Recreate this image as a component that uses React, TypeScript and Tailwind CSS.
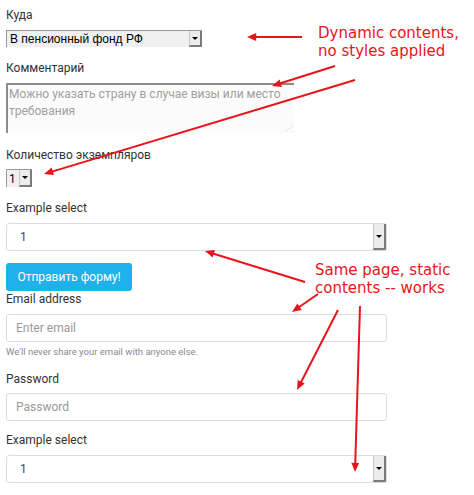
const arrows = [
  { x1: 302, y1: 37, x2: 247, y2: 37 },
  { x1: 335, y1: 66, x2: 272, y2: 86 },
  { x1: 355, y1: 80, x2: 44, y2: 174 },
  { x1: 305, y1: 282, x2: 205, y2: 251 },
  { x1: 318, y1: 294, x2: 292, y2: 312 },
  { x1: 338, y1: 310, x2: 297, y2: 390 },
  { x1: 360, y1: 306, x2: 355, y2: 472 },
];

function Arrow({ x1, y1, x2, y2 }: { x1: number; y1: number; x2: number; y2: number }) {
  const a = Math.atan2(y2 - y1, x2 - x1);
  const len = 10;
  const spread = 0.4;
  const p1 = [x2 - len * Math.cos(a - spread), y2 - len * Math.sin(a - spread)];
  const p2 = [x2 - len * Math.cos(a + spread), y2 - len * Math.sin(a + spread)];
  return (
    <g>
      <line x1={x1} y1={y1} x2={x2 - 4 * Math.cos(a)} y2={y2 - 4 * Math.sin(a)} stroke="#e8141a" strokeWidth={2} />
      <polygon points={`${x2},${y2} ${p1[0]},${p1[1]} ${p2[0]},${p2[1]}`} fill="#e8141a" />
    </g>
  );
}

function NativeButton() {
  return (
    <div className="flex w-[13px] items-center justify-center self-stretch border-l border-[#c8c8c8] bg-[#ececec] border-r-2 border-b-2 border-r-[#7a7a7a] border-b-[#7a7a7a]">
      <div className="h-0 w-0 border-x-[3px] border-t-[3px] border-x-transparent border-t-black" />
    </div>
  );
}

function BsSelect({ value }: { value: string }) {
  return (
    <div className="mt-[6px] flex h-[28px] w-[381px] items-center rounded-[3px] border border-[#dcdcdc] bg-white">
      <span className="flex-1 pl-[13px] text-[12px] text-[#444]">{value}</span>
      <NativeButton />
    </div>
  );
}

function Label({ children, className = "" }: { children: React.ReactNode; className?: string }) {
  return <div className={`text-[12px] text-[#333] ${className}`}>{children}</div>;
}

export default function App() {
  return (
    <div className="relative h-[495px] w-[474px] overflow-hidden bg-white font-['Roboto',sans-serif]">
      <div className="flex flex-col pl-[6px] pt-[6px]">
        <Label className="leading-[18px]">Куда</Label>
        <div className="mt-[6px] flex h-[17px] w-[196px] items-center border border-[#9a9a9a] border-r-0 border-b-0 bg-[#f0f0f0]">
          <span className="flex-1 pl-[3px] text-[12px] leading-none text-black font-['Liberation_Sans',sans-serif]">
            В пенсионный фонд РФ
          </span>
          <NativeButton />
        </div>

        <Label className="mt-[12px] leading-[18px]">Комментарий</Label>
        <div className="mt-[6px] flex h-[50px] w-[288px] border-l-2 border-t-2 border-[#8c8c8c] bg-[#fbfbfb] pl-[1px] pt-[1px]">
          <div className="relative flex-1 text-[12px] leading-[17px] text-[#a0a0a0]">
            Можно указать страну в случае визы или место требования
            <span className="absolute bottom-[2px] right-[2px] text-[6px] leading-none text-[#bbb]">⋰</span>
          </div>
        </div>

        <Label className="mt-[13px] leading-[18px]">Количество экземпляров</Label>
        <div className="mt-[5px] flex h-[18px] w-[26px] items-center border border-[#9a9a9a] border-r-0 border-b-0 bg-[#f0f0f0]">
          <span className="flex-1 pl-[2px] text-[12px] leading-none text-black">1</span>
          <NativeButton />
        </div>

        <Label className="mt-[12px] leading-[18px]">Example select</Label>
        <BsSelect value="1" />

        <div className="mt-[12px] flex h-[28px] w-[126px] items-center justify-center rounded-[3px] bg-[#1fb1ea] text-[12px] text-white">
          Отправить форму!
        </div>
        <Label className="leading-[16px]">Email address</Label>
        <div className="mt-[7px] flex h-[28px] w-[381px] items-center rounded-[3px] border border-[#dcdcdc] pl-[9px] text-[12px] text-[#999]">
          Enter email
        </div>
        <div className="mt-[3px] text-[9.5px] leading-[14px] text-[#8a8a8a]">We'll never share your email with anyone else.</div>

        <Label className="mt-[11px] leading-[18px]">Password</Label>
        <div className="mt-[5px] flex h-[28px] w-[381px] items-center rounded-[3px] border border-[#dcdcdc] pl-[9px] text-[12px] text-[#999]">
          Password
        </div>

        <Label className="mt-[10px] leading-[18px]">Example select</Label>
        <BsSelect value="1" />
      </div>

      <div className="absolute left-[318px] top-[24px] font-['DejaVu_Sans',sans-serif] text-[15px] leading-[18px] text-[#e8141a]">
        Dynamic contents,
        <br />
        no styles applied
      </div>
      <div className="absolute left-[315px] top-[261px] font-['DejaVu_Sans',sans-serif] text-[15px] leading-[18px] text-[#e8141a]">
        Same page, static
        <br />
        contents -- works
      </div>

      <svg className="pointer-events-none absolute inset-0" width={474} height={495}>
        {arrows.map((a, i) => (
          <Arrow key={i} {...a} />
        ))}
      </svg>
    </div>
  );
}
